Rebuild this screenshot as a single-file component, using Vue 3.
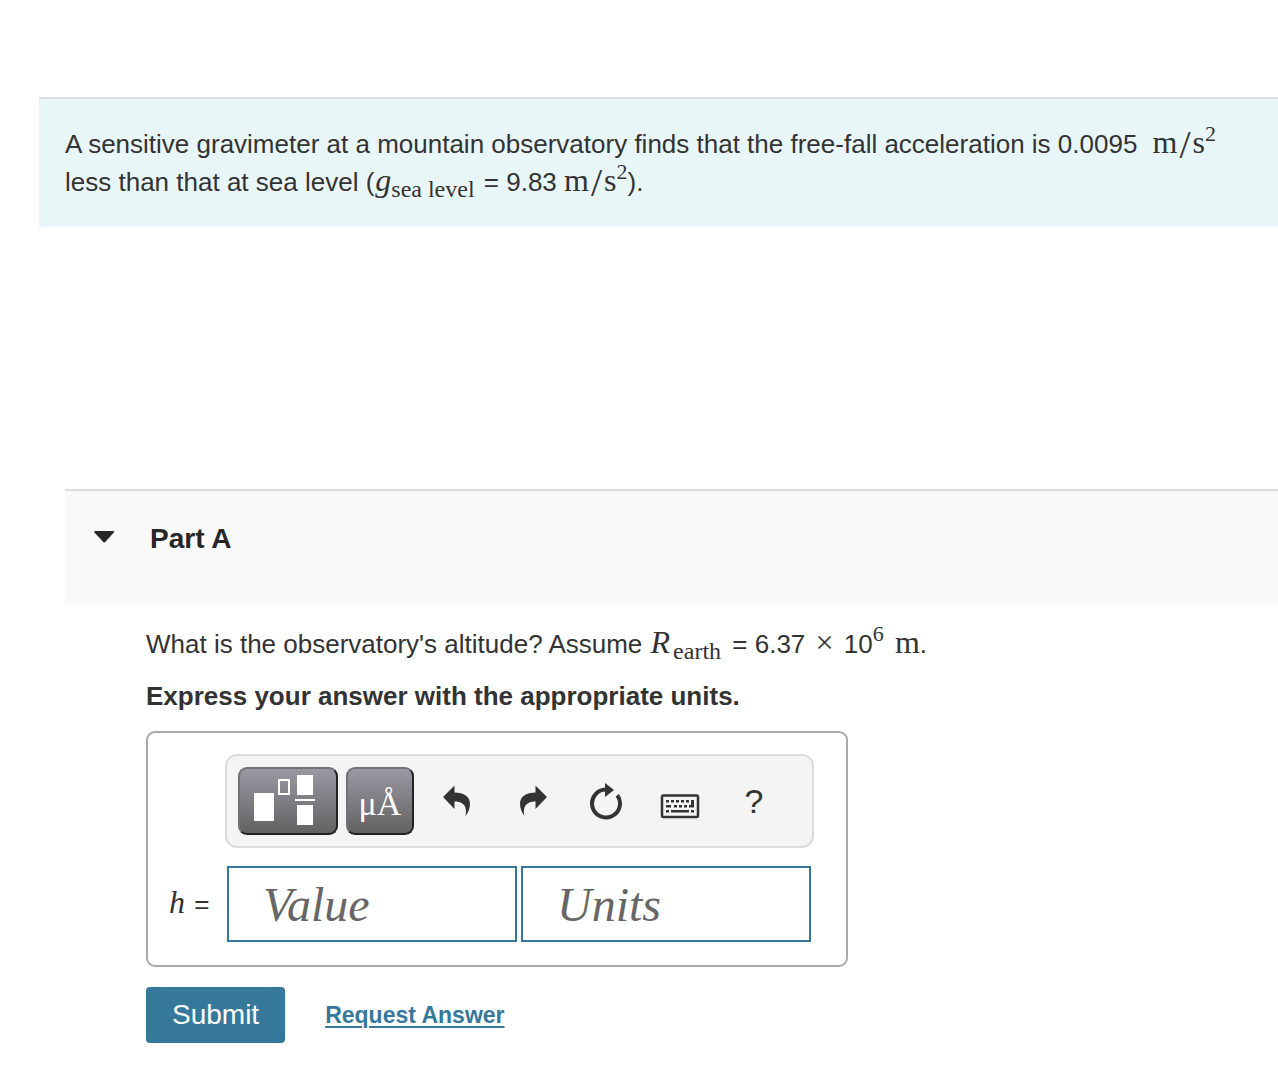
<script setup>
import { ref } from 'vue'

const value = ref('')
const units = ref('')
const open = ref(true)
</script>

<template>
  <main class="page">
    <section class="intro">
      <p>
        A sensitive gravimeter at a mountain observatory finds that the free-fall acceleration is 0.0095
        <span class="math unit lead">m<span class="slash">/</span>s<sup>2</sup></span>
        less than that at sea level (<span class="math symbol"><i>g</i><sub>sea&nbsp;level</sub></span>
        = 9.83 <span class="math unit">m<span class="slash">/</span>s<sup>2</sup></span>).
      </p>
    </section>

    <section class="part">
      <header class="part-head">
        <button class="toggle" type="button" aria-label="Toggle Part A" :aria-expanded="open" @click="open = !open">
          <svg width="22" height="18" viewBox="0 0 22 18"><path d="M2.200 1H20.200Q22 1 20.800 2.500L12.500 11.800Q11.200 13 10 11.800L1.500 2.500Q.400 1 2.200 1Z" fill="#262626" /></svg>
        </button>
        <h2>Part A</h2>
      </header>

      <div v-show="open" class="part-body">
        <p class="question">
          What is the observatory's altitude? Assume
          <span class="math symbol capital"><i>R</i><sub>earth</sub></span>
          = 6.37 <span class="math times">×</span> 10<span class="math"><sup>6</sup></span>&#32;<span class="math meter">m</span>.
        </p>
        <p class="instruction">Express your answer with the appropriate units.</p>

        <form @submit.prevent>
          <div class="answer">
            <div class="toolbar" role="toolbar">
              <button class="dark wide" type="button" aria-label="Templates">
                <svg width="96" height="64" viewBox="0 0 96 64" fill="#fff">
                  <rect x="14" y="24" width="20" height="28" />
                  <rect x="39" y="11" width="10" height="14" fill="none" stroke="#fff" stroke-width="2" />
                  <rect x="57" y="6" width="16" height="20" />
                  <rect x="55" y="30" width="20" height="2" />
                  <rect x="57" y="36" width="16" height="20" />
                </svg>
              </button>
              <button class="dark symbols" type="button" aria-label="Symbols">μÅ</button>
              <div class="tools">
                <button type="button" aria-label="Undo">
                  <svg width="40" height="40" viewBox="0 0 40 40" fill="#333">
                    <path d="M5 16 16.500 4.500V11.500C26 11.500 32 15.500 32 23C32 27.500 30 32 27.500 35C28.800 29 28.500 20.500 16.500 20.500V28Z" />
                  </svg>
                </button>
                <button type="button" aria-label="Redo">
                  <svg width="40" height="40" viewBox="0 0 40 40" fill="#333">
                    <path d="M35 16 23.500 4.500V11.500C14 11.500 8 15.500 8 23C8 27.500 10 32 12.500 35C11.200 29 11.500 20.500 23.500 20.500V28Z" />
                  </svg>
                </button>
                <button type="button" aria-label="Reset">
                  <svg width="40" height="40" viewBox="0 0 40 40">
                    <path d="M20 8.500A14 14 0 1 0 31.300 14.200" fill="none" stroke="#333" stroke-width="4" />
                    <path d="M19 2 28 9 19 16Z" fill="#333" />
                  </svg>
                </button>
                <button type="button" aria-label="Keyboard">
                  <svg width="40" height="40" viewBox="0 0 40 40" fill="#333">
                    <rect x="2" y="14.500" width="36" height="21.500" rx="1.500" fill="none" stroke="#333" stroke-width="2.500" />
                    <path d="M6 19h3v2.500H6zM11 19h3v2.500h-3zM16 19h3v2.500h-3zM21 19h3v2.500h-3zM26 19h3v2.500h-3zM31 19h3v7.500h-5V24h2zM6 24h5v2.500H6zM14 24h3v2.500h-3zM19 24h3v2.500h-3zM24 24h3v2.500h-3zM6 29h3v2.500H6zM11 29h18v2.500H11zM31 29h3v2.500h-3z" />
                  </svg>
                </button>
                <button type="button" class="help" aria-label="Help">?</button>
              </div>
            </div>

            <div class="entry">
              <label for="value"><span class="math symbol"><i>h</i></span> =</label>
              <div class="fields">
                <input id="value" v-model="value" type="text" placeholder="Value" />
                <input v-model="units" type="text" placeholder="Units" aria-label="Units" />
              </div>
            </div>
          </div>

          <div class="actions">
            <button class="submit" type="submit">Submit</button>
            <a href="#">Request Answer</a>
          </div>
        </form>
      </div>
    </section>
  </main>
</template>

<style>
body {
  margin: 0;
  background: #fff;
}
</style>

<style scoped>
* {
  box-sizing: border-box;
}
.page {
  padding: 97px 0 24px 39px;
  color: #333;
  font: 26px/38px "Liberation Sans", Arial, sans-serif;
}
p,
h2 {
  margin: 0;
}
button {
  padding: 0;
  border: 0;
  background: none;
  color: inherit;
  font: inherit;
  cursor: pointer;
}
svg {
  display: block;
}
.intro {
  padding: 26px;
  border-top: 2px solid #dcdfdf;
  background: #e9f6f7;
}
.math {
  font-family: "Liberation Serif", "Times New Roman", serif;
  font-size: 32px;
  line-height: 0;
  white-space: nowrap;
}
.math sub,
.math sup {
  font-size: 24px;
  line-height: 0;
}
.math sub {
  vertical-align: -6px;
}
.math sup {
  font-size: 22px;
  vertical-align: 12px;
}
.symbol {
  margin: 0 2px 0 1px;
}
.capital sub {
  margin: 0 2px 0 3px;
}
.lead {
  margin-left: 8px;
}
.slash {
  padding: 0 2px;
  font-size: 40px;
  vertical-align: -5px;
}
.times {
  margin: 0 3px;
}
.meter {
  margin-left: 4px;
}

.part {
  margin: 262px 0 0 26px;
}
.part-head {
  display: flex;
  align-items: center;
  gap: 35px;
  height: 115px;
  padding: 0 28px 17px;
  border-top: 2px solid #dcdcdc;
  background: #f9f9f9;
}
h2 {
  color: #262626;
  font-size: 28px;
  line-height: 38px;
}
.part-body {
  padding: 21px 26px 0 81px;
}
.instruction {
  margin-top: 14px;
  font-weight: bold;
}
.answer {
  max-width: 702px;
  margin-top: 16px;
  padding: 21px 32px 23px 20px;
  border: 2px solid #a9a9a9;
  border-radius: 9px;
}
.toolbar {
  display: flex;
  gap: 8px;
  margin-left: 57px;
  padding: 11px;
  border: 2px solid #dcdcdc;
  border-radius: 12px;
  background: #f4f4f4;
}
.dark {
  width: 68px;
  height: 68px;
  border: 2px solid;
  border-color: #737373 #222 #222 #737373;
  border-radius: 9px;
  background: linear-gradient(#9a98a3, #626262);
  color: #fff;
}
.wide {
  width: 100px;
}
.symbols {
  padding-top: 6px;
  font-family: "Liberation Serif", "Times New Roman", serif;
  font-size: 34px;
}
.tools {
  display: flex;
  gap: 8px;
  padding-left: 3px;
}
.tools button {
  display: flex;
  align-items: center;
  justify-content: center;
  width: 66px;
  height: 68px;
}
.tools .help {
  font-size: 34px;
}
.entry {
  display: flex;
  align-items: center;
  margin-top: 18px;
}
.entry label {
  flex: 0 0 59px;
  white-space: nowrap;
}
.fields {
  display: flex;
  flex: 1;
  gap: 4px;
  min-width: 0;
  padding-right: 3px;
}
input {
  flex: 1;
  width: 100%;
  min-width: 0;
  height: 76px;
  padding: 0 34px;
  border: 2px solid #33789a;
  border-radius: 0;
  background: #fff;
  color: #333;
  font: italic 48px "Liberation Serif", "Times New Roman", serif;
}
input::placeholder {
  color: #666;
  opacity: 1;
}
.actions {
  display: flex;
  align-items: center;
  gap: 40px;
  margin-top: 20px;
}
.submit {
  padding: 9px 26px;
  border-radius: 4px;
  background: #36789a;
  color: #fff;
  font-size: 28px;
}
a {
  color: #36789a;
  font-size: 23px;
  font-weight: bold;
  text-decoration-thickness: 2px;
  text-underline-offset: 3px;
}
</style>
